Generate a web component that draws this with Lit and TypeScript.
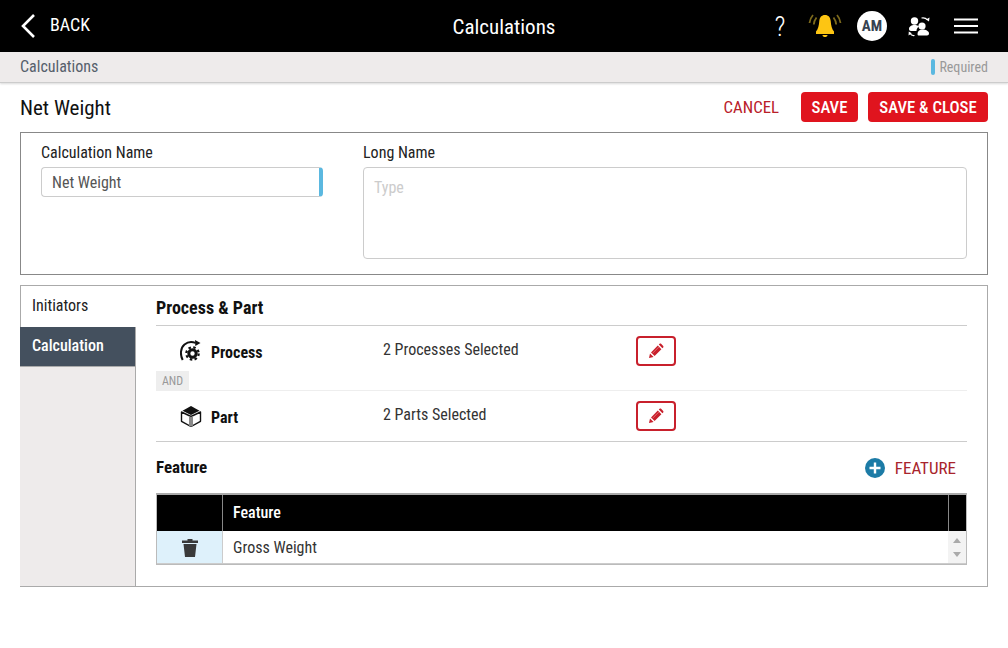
import { LitElement, html, css } from "lit";
import { customElement } from "lit/decorators.js";

const pencil = html`<svg width="16" height="16" viewBox="0 0 16 16"><path fill="#c8202c" d="M1 15l1-4.600 3.600 3.600zM3 9.400l6.800-6.800 3.600 3.600-6.800 6.800zM10.800 1.600l.8-.8c.5-.4 1.100-.4 1.500 0l2.100 2.100c.4.4.4 1 0 1.500l-.8.8z"/><path d="M4.500 10.300l6.300-6.300" stroke="#e88" stroke-width=".7"/></svg>`;

@customElement("app-root")
export class AppRoot extends LitElement {
  static styles = css`
    :host { display: block; width: 1008px; height: 648px; background: #fff; font-family: Roboto, "Liberation Sans", sans-serif; font-stretch: condensed; color: #222; overflow: hidden; font-size: 16px; }
    * { box-sizing: border-box; }
    .top { height: 52px; background: #000; color: #fff; display: grid; grid-template-columns: 1fr auto 1fr; align-items: center; padding: 0 20px; }
    .back { display: flex; align-items: center; gap: 14px; font-size: 18px; font-weight: 400; }
    .back span { margin-top: -3px; }
    .title { font-size: 21px; font-weight: 400; margin-top: 1px; }
    .icons { display: flex; align-items: center; justify-content: flex-end; padding-right: 10px; }
    .q { font-size: 27px; font-weight: 300; width: 24px; text-align: center; margin-right: 16px; margin-top: 1px; }
    .bell { margin-right: 13px; display: block; }
    .avatar { width: 30px; height: 30px; border-radius: 50%; background: #fff; font-size: 15px; font-weight: 700; display: flex; align-items: center; justify-content: center; margin-right: 21px; color: #36424f; }
    .burger { margin-left: 24px; display: block; }
    .sub { height: 31px; background: #eeebeb; border-bottom: 1px solid #ccc; box-shadow: 0 1px 2px rgba(0,0,0,.15); display: flex; align-items: center; justify-content: space-between; padding: 0 20px 2px; color: #56606c; font-size: 16px; }
    .req { display: flex; align-items: center; gap: 4px; color: #999; font-size: 14px; margin-top: 2px; }
    .req i { width: 4px; height: 16px; border-radius: 2px; background: #5bb8e0; }
    .head { height: 49px; display: flex; align-items: center; justify-content: space-between; padding: 0 20px; }
    .head h1 { margin: 0; font-size: 21px; font-weight: 400; color: #111; }
    .acts { display: flex; align-items: center; }
    .cancel { color: #b92029; font-size: 16.800px; font-weight: 400; margin-right: 22px; margin-bottom: 2px; }
    .btn { background: #e0141e; color: #fff; height: 30px; border-radius: 4px; font-size: 16.800px; font-weight: 500; display: flex; align-items: center; justify-content: center; margin-bottom: 1px; }
    .btn.s { width: 57px; }
    .btn.c { width: 120px; margin-left: 10px; }
    .card1 { margin: 0 20px; height: 143px; border: 1px solid #888; display: flex; padding: 12px 20px 0; gap: 40px; }
    .f1 { width: 282px; } .f2 { flex: 1; }
    .lab { font-size: 16px; color: #222; line-height: 16px; margin-bottom: 6px; }
    .inp { height: 30px; width: 282px; border: 1px solid #ccc; border-radius: 4px; border-right: 4px solid #5bb8e0; padding: 0 10px; display: flex; align-items: center; font-size: 16px; color: #555; }
    .ta { height: 92px; border: 1px solid #ccc; border-radius: 4px; padding: 11px 10px; font-size: 16px; color: #ccc; line-height: 18px; }
    .card2 { margin: 10px 20px 0; height: 302px; border: 1px solid #aaa; border-left: none; display: flex; }
    .tabs { width: 116px; background: #eeebeb; border-right: 1px solid #aaa; flex: none; display: flex; flex-direction: column; }
    .tab { height: 41px; padding: 0 11px 2px; display: flex; align-items: center; font-size: 16px; background: #fff; border-left: 1px solid #aaa; margin-right: -1px; }
    .tab.on { height: 40px; background: #44505e; color: #fff; font-weight: 500; font-size: 16px; border-left: none; margin-right: 0; padding: 0 12px 2px; border-bottom: 1px solid #aaa; }
    .main { flex: 1; padding: 0 20px; min-width: 0; }
    .h2 { height: 40px; padding-top: 4px; display: flex; align-items: center; font-size: 18px; font-weight: 700; color: #111; border-bottom: 1px solid #ccc; }
    .row { display: flex; align-items: center; height: 49px; }
    .row.b { margin-bottom: 1px; }
    .ic { width: 22px; margin-left: 24px; margin-right: 9px; display: flex; }
    .nm { width: 172px; font-weight: 700; font-size: 16px; color: #111; margin-top: 4px; }
    .val { width: 253px; font-size: 16px; color: #333; margin-top: -2px; }
    .edit { width: 40px; height: 30px; border: 2px solid #c8202c; border-radius: 4px; display: flex; align-items: center; justify-content: center; }
    .and { height: 16px; display: flex; border-bottom: 1px solid #eee; }
    .and span { width: 33px; height: 19px; margin-top: -4px; background: #eee; color: #999; font-size: 12px; font-weight: 400; display: flex; align-items: center; justify-content: center; }
    .sep { border-top: 1px solid #ccc; }
    .fhead { height: 51px; display: flex; align-items: center; justify-content: space-between; }
    .fhead b { font-size: 17px; color: #111; margin-top: -1px; }
    .add { display: flex; align-items: center; gap: 10px; color: #a8242c; font-size: 17px; margin-right: 11px; }
    .tbl { border: 1px solid #bbb; border-top: 2px solid #aaa; height: 72px; }
    .thead { height: 36px; background: #000; color: #fff; display: grid; grid-template-columns: 65px 1fr 18px; align-items: stretch; font-weight: 500; font-size: 16px; }
    .thead div { display: flex; align-items: center; padding: 0 0 2px 10px; }
    .thead div + div { border-left: 1px solid #888; }
    .tr { height: 33px; display: grid; grid-template-columns: 66px 1fr 18px; font-size: 16px; color: #333; border-bottom: 1px solid #ccc; }
    .del { background: #def1fb; display: flex; align-items: center; justify-content: center; border-right: 1px solid #ccc; padding-top: 2px; }
    .cell { display: flex; align-items: center; padding-left: 10px; }
    .scroll { background: #f3f3f3; display: flex; flex-direction: column; align-items: center; justify-content: center; gap: 9px; }
    .up { border: 4px solid transparent; border-top: 0; border-bottom: 5px solid #aaa; }
    .down { border: 4px solid transparent; border-bottom: 0; border-top: 5px solid #aaa; }
  `;
  render() {
    return html`
      <div class="top">
        <div class="back"><svg width="16" height="26" viewBox="0 0 16 26"><path d="M14 2L3 13l11 11" fill="none" stroke="#fff" stroke-width="2.600"/></svg><span>BACK</span></div>
        <div class="title">Calculations</div>
        <div class="icons">
          <span class="q">?</span>
          <svg class="bell" width="36" height="24" viewBox="0 0 36 24"><g fill="none" stroke="#7d6a1c" stroke-width="1.800"><path d="M1.500 9c.3-3 1.300-5.500 3.500-8M5.800 10.500c.2-2.800 1-4.800 2.700-7M32.500 9c-.3-3-1.300-5.500-3.500-8M28.200 10.500c-.2-2.800-1-4.800-2.700-7"/></g><path fill="#fdc513" d="M17 1c3.500 0 5.300 2.300 5.700 6 .4 4.500 1.100 8 3.300 10.500V20H8v-2.500C10.200 15 10.900 11.500 11.300 7 11.700 3.300 13.500 1 17 1zM14.500 21h5c0 2.700-5 2.700-5 0z"/></svg>
          <div class="avatar">AM</div>
          <svg width="22" height="22" viewBox="0 0 22 22"><g fill="#fff"><circle cx="6.500" cy="6" r="3.700"/><path d="M1 14c0-2.500 2.500-4 5.500-4 2 0 3.500.5 4.500 1.500-1.500 1-2.500 2.500-2.500 4.500H3c-1.300 0-2-.8-2-2z"/><circle cx="14" cy="11" r="3.600"/><path d="M9.500 19c0-3 2-4.500 5-4.500s6.500 1.500 6.500 4c0 1.300-.8 2-2 2h-8c-1 0-1.500-.5-1.500-1.500z"/></g><path d="M13.500 3c2.500-.5 4.500.2 6 1.800" fill="none" stroke="#fff" stroke-width="1.200"/><path d="M21.500 2.500l-.5 4-3-2z" fill="#fff"/><path d="M6.500 20.500c-2 .3-3.500-.5-4.500-2" fill="none" stroke="#fff" stroke-width="1.200"/><path d="M.5 20.500l.3-4 3 1.700z" fill="#fff"/></svg>
          <svg class="burger" width="24" height="16" viewBox="0 0 24 16"><path d="M0 1.500h24M0 8h24M0 14.500h24" stroke="#fff" stroke-width="2"/></svg>
        </div>
      </div>
      <div class="sub"><span>Calculations</span><span class="req"><i></i>Required</span></div>
      <div class="head"><h1>Net Weight</h1><div class="acts"><span class="cancel">CANCEL</span><span class="btn s">SAVE</span><span class="btn c">SAVE &amp; CLOSE</span></div></div>
      <div class="card1">
        <div class="f1"><div class="lab">Calculation Name</div><div class="inp">Net Weight</div></div>
        <div class="f2"><div class="lab">Long Name</div><div class="ta">Type</div></div>
      </div>
      <div class="card2">
        <div class="tabs"><div class="tab">Initiators</div><div class="tab on">Calculation</div></div>
        <div class="main">
          <div class="h2">Process &amp; Part</div>
          <div class="row"><span class="ic"><svg width="22" height="22" viewBox="0 0 22 22"><path d="M2.700 20C0 15 .3 8 4.500 4.500c3-2.500 7.500-3 11-1.600" fill="none" stroke="#111" stroke-width="2"/><path d="M15 0l5.500 3-5.200 3z" fill="#111"/><circle cx="12.500" cy="13.500" r="3.700" fill="none" stroke="#111" stroke-width="3"/><circle cx="12.500" cy="13.500" r="6.200" fill="none" stroke="#111" stroke-width="2.200" stroke-dasharray="2.500 2.370"/></svg></span><span class="nm">Process</span><span class="val">2 Processes Selected</span><span class="edit">${pencil}</span></div>
          <div class="and"><span>AND</span></div>
          <div class="row b"><span class="ic"><svg width="22" height="22" viewBox="0 0 22 22"><path d="M1.500 7v9.300l9.500 5.200 9.500-5.200V7L11 11.500z" fill="none" stroke="#111" stroke-width="1.400" stroke-linejoin="round"/><path d="M11 1l8.500 4.700L11 10 2.500 5.700z" fill="#111"/><path d="M9 11l2 1 2-1v9.800l-2 1-2-1z" fill="#8a8a8a"/></svg></span><span class="nm">Part</span><span class="val">2 Parts Selected</span><span class="edit">${pencil}</span></div>
          <div class="sep"></div>
          <div class="fhead"><b>Feature</b><span class="add"><svg width="20" height="20" viewBox="0 0 20 20"><circle cx="10" cy="10" r="10" fill="#1c7ba6"/><path d="M10 4.500v11M4.500 10h11" stroke="#fff" stroke-width="2.400"/></svg>FEATURE</span></div>
          <div class="tbl">
            <div class="thead"><div></div><div>Feature</div><div></div></div>
            <div class="tr"><div class="del"><svg width="16" height="18" viewBox="0 0 16 18"><path fill="#3a3a3a" d="M5.500 0h5v1.500H16V4H0V1.500h5.500zM1.500 5h13L13 18H3z"/></svg></div><div class="cell">Gross Weight</div><div class="scroll"><i class="up"></i><i class="down"></i></div></div>
          </div>
        </div>
      </div>
    `;
  }
}
